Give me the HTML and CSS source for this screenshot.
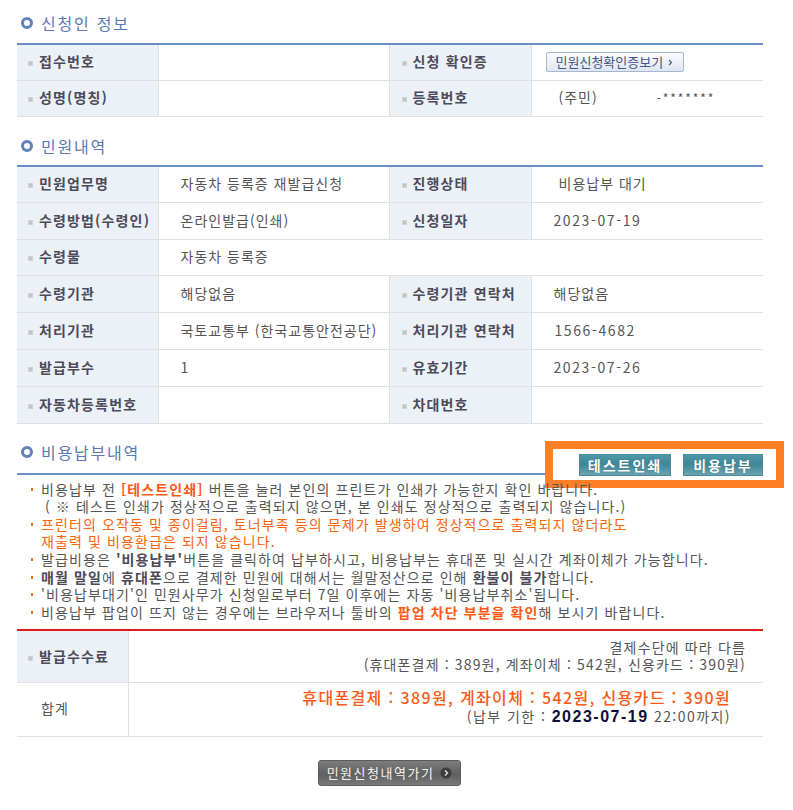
FILE: index.html
```html
<!DOCTYPE html>
<html lang="ko">
<head>
<meta charset="utf-8">
<title>민원신청내역</title>
<link rel="stylesheet" href="styles.css">
</head>
<body>
<div class="page">
  <h2 class="title first"><span class="ring"></span>신청인 정보</h2>
  <table class="info short">
    <colgroup><col class="c1"><col class="c2"><col class="c3"><col class="c4"></colgroup>
    <tr><th><span class="sq"></span>접수번호</th><td></td><th><span class="sq"></span>신청 확인증</th><td class="btncell"><a class="confirm">민원신청확인증보기<svg class="chev" width="5" height="7" viewBox="0 0 5 7"><path d="M1 1l2.5 2.5L1 6" fill="none" stroke="#4a5f8c" stroke-width="1.2"/></svg></a></td></tr>
    <tr><th><span class="sq"></span>성명(명칭)</th><td></td><th><span class="sq"></span>등록번호</th><td class="v6">(주민)<span class="mask">-*******</span></td></tr>
  </table>
  <div class="redact"></div>

  <h2 class="title"><span class="ring"></span>민원내역</h2>
  <table class="info">
    <colgroup><col class="c1"><col class="c2"><col class="c3"><col class="c4"></colgroup>
    <tr><th><span class="sq"></span>민원업무명</th><td>자동차 등록증 재발급신청</td><th><span class="sq"></span>진행상태</th><td class="v6">비용납부 대기</td></tr>
    <tr><th><span class="sq"></span>수령방법(수령인)</th><td>온라인발급(인쇄)</td><th><span class="sq"></span>신청일자</th><td class="num">2023-07-19</td></tr>
    <tr><th><span class="sq"></span>수령물</th><td colspan="3">자동차 등록증</td></tr>
    <tr><th><span class="sq"></span>수령기관</th><td>해당없음</td><th><span class="sq"></span>수령기관 연락처</th><td>해당없음</td></tr>
    <tr><th><span class="sq"></span>처리기관</th><td>국토교통부 (한국교통안전공단)</td><th><span class="sq"></span>처리기관 연락처</th><td class="v2 num">1566-4682</td></tr>
    <tr><th><span class="sq"></span>발급부수</th><td>1</td><th><span class="sq"></span>유효기간</th><td class="num">2023-07-26</td></tr>
    <tr><th><span class="sq"></span>자동차등록번호</th><td></td><th><span class="sq"></span>차대번호</th><td></td></tr>
  </table>

  <div class="payhead">
    <h2 class="title inner"><span class="ring"></span>비용납부내역</h2>
    <div class="callout">
      <a class="teal wide">테스트인쇄</a>
      <a class="teal">비용납부</a>
    </div>
  </div>
  <ul class="notes">
    <li>비용납부 전 <b class="hl">[테스트인쇄]</b> 버튼을 눌러 본인의 프린트가 인쇄가 가능한지 확인 바랍니다.<br><span class="ind">( ※ 테스트 인쇄가 정상적으로 출력되지 않으면, 본 인쇄도 정상적으로 출력되지 않습니다.)</span></li>
    <li class="warn">프린터의 오작동 및 종이걸림, 토너부족 등의 문제가 발생하여 정상적으로 출력되지 않더라도<br>재출력 및 비용환급은 되지 않습니다.</li>
    <li>발급비용은 <b>'비용납부'</b>버튼을 클릭하여 납부하시고, 비용납부는 휴대폰 및 실시간 계좌이체가 가능합니다.</li>
    <li><b>매월 말일</b>에 <b>휴대폰</b>으로 결제한 민원에 대해서는 월말정산으로 인해 <b>환불이 불가</b>합니다.</li>
    <li>'비용납부대기'인 민원사무가 신청일로부터 7일 이후에는 자동 '비용납부취소'됩니다.</li>
    <li>비용납부 팝업이 뜨지 않는 경우에는 브라우저나 툴바의 <b class="hl">팝업 차단 부분을 확인</b>해 보시기 바랍니다.</li>
  </ul>

  <table class="fee">
    <colgroup><col class="f1"><col></colgroup>
    <tr class="r1"><th><span class="sq"></span>발급수수료</th><td>결제수단에 따라 다름<br>(휴대폰결제 : 389원, 계좌이체 : 542원, 신용카드 : 390원)</td></tr>
    <tr class="r2"><td class="sum">합계</td><td class="tot"><span class="big">휴대폰결제 : 389원, 계좌이체 : 542원, 신용카드 : 390원</span><br>(납부 기한 : <b class="date">2023-07-19</b> 22:00까지)</td></tr>
  </table>

  <div class="foot"><a class="back">민원신청내역가기<svg class="dot" width="12" height="12" viewBox="0 0 12 12"><circle cx="6" cy="6" r="5.5" fill="#3d3d3d"/><path d="M5 3.5L7.5 6 5 8.5" fill="none" stroke="#e6e6e6" stroke-width="1.3"/></svg></a></div>
</div>
</body>
</html>
```
FILE: styles.css
```css
* { box-sizing: border-box; }
html, body { margin: 0; padding: 0; background: #fff; }
body { font-family: "Noto Sans CJK KR", "Liberation Sans", sans-serif; font-size: 14px; color: #555; }
.page { position: relative; width: 793px; height: 810px; padding: 0 30px 0 17px; }
.title { display: flex; align-items: center; margin: 18px 0 8px; height: 22px; font-size: 16px; font-weight: 400; color: #5b78b4; letter-spacing: 1.8px; line-height: 22px; }
.title.first { margin-top: 12px; margin-bottom: 9px; }
.title.inner { margin: 2px 0 0; }
.ring { width: 12px; height: 12px; border: 3px solid #5f80b8; border-radius: 50%; margin: 0 8px 0 4px; flex: none; background: #fff; }
table { border-collapse: collapse; table-layout: fixed; width: 746px; }
.info { border-top: 2px solid #6c8fc7; }
.c1 { width: 141px; } .c2 { width: 231px; } .c3 { width: 142px; } .c4 { width: 232px; }
.info tr { height: 36.8px; }
.info.short tr { height: 36px; }
.info th, .fee th { background: #ecf1f8; font-weight: 700; font-size: 14px; color: #4c4a58; text-align: left; padding: 0 0 2px 11px; white-space: nowrap; letter-spacing: 1.15px; }
.info th:nth-child(3) { padding-left: 12px; }
.info th, .info td, .fee th, .fee td { border: 1px solid #e0e0e0; border-top: 0; }
.info tr > :first-child, .fee tr > :first-child { border-left: 0; }
.info tr > :last-child, .fee tr > :last-child { border-right: 0; }
.info td { padding: 0 0 2px 22px; font-size: 14px; white-space: nowrap; letter-spacing: 1px; }
.info td.num { letter-spacing: 1.6px; }
.info td.v6 { padding-left: 27px; }
.info td.v2 { padding-left: 23px; }
.info td.btncell { padding-left: 14px; }
.sq { display: inline-block; width: 5px; height: 5px; background: #c4c4c4; border: 1px solid #d2d2d2; margin-right: 6px; vertical-align: 1px; }
.mask { margin-left: 59px; font-size: 12px; letter-spacing: 1.9px; }
.confirm { display: inline-flex; align-items: center; height: 20px; width: 138px; padding-left: 9px; border: 1px solid #a4b6d2; border-radius: 2px; background: linear-gradient(#fafcfe, #dfe6f0); color: #44548a; font-size: 13px; letter-spacing: 0; line-height: 18px; vertical-align: middle; }
.chev { margin-left: 5px; }
.redact { position: absolute; left: 178px; top: 116px; width: 76px; height: 3px; background: #fff; }
.payhead { display: flex; height: 45px; margin-top: 6px; border-bottom: 2px solid #6c8fc7; align-items: center; }
.callout { position: absolute; left: 545px; top: 429px; width: 239px; height: 47px; border: 8px solid #ff7f27; background: #fff; display: flex; justify-content: flex-end; align-items: center; gap: 12px; padding-right: 13px; }
.teal { display: flex; align-items: center; justify-content: center; width: 80px; height: 22px; border: 1px solid #4e8b99; background: linear-gradient(#4d98a8 0%, #3f8697 45%, #6aa3b0 100%); color: #fff; font-size: 14px; font-weight: 700; letter-spacing: 2px; text-shadow: 0 0 1px #2f6a78; }
.teal.wide { width: 92px; }
.notes { list-style: none; margin: 6px 0 0; padding: 0 0 0 24px; line-height: 17.6px; font-size: 14px; letter-spacing: 1.1px; white-space: nowrap; }
.notes li { position: relative; }
.notes li::before { content: ""; position: absolute; left: -10px; top: 7px; width: 2px; height: 3px; background: #f26a13; }
.notes b { color: #4c4a58; }
.notes b.hl { color: #ff5a14; }
.notes .warn { color: #f9640c; }
.ind { margin-left: 4px; }
.fee { margin-top: 8px; border-top: 2px solid #df1c1c; }
.f1 { width: 111px; }
.r1 { height: 52px; }
.r2 { height: 54px; }
.fee td { font-size: 14px; line-height: 17px; text-align: right; padding: 0 17px 2px 0; letter-spacing: 1.15px; white-space: nowrap; }
.fee td.sum { text-align: left; padding-left: 24px; }
.fee td.tot { padding: 0 32px 4px 0; line-height: 18px; letter-spacing: 1.45px; }
.big { font-size: 16px; font-weight: 500; color: #fb5a16; letter-spacing: 1.35px; }
.date { color: #0d0d3a; font-family: "Liberation Sans", sans-serif; font-size: 16px; letter-spacing: 1.5px; }
.foot { display: flex; justify-content: center; margin-top: 23px; padding-right: 1px; }
.back { display: flex; align-items: center; justify-content: center; gap: 6px; width: 143px; height: 26px; border: 1px solid #5c5c5c; border-radius: 3px; background: linear-gradient(#7d7d7d, #5f5f5f 55%, #797979); color: #f2f2f2; font-size: 13px; letter-spacing: 1.5px; }
```
